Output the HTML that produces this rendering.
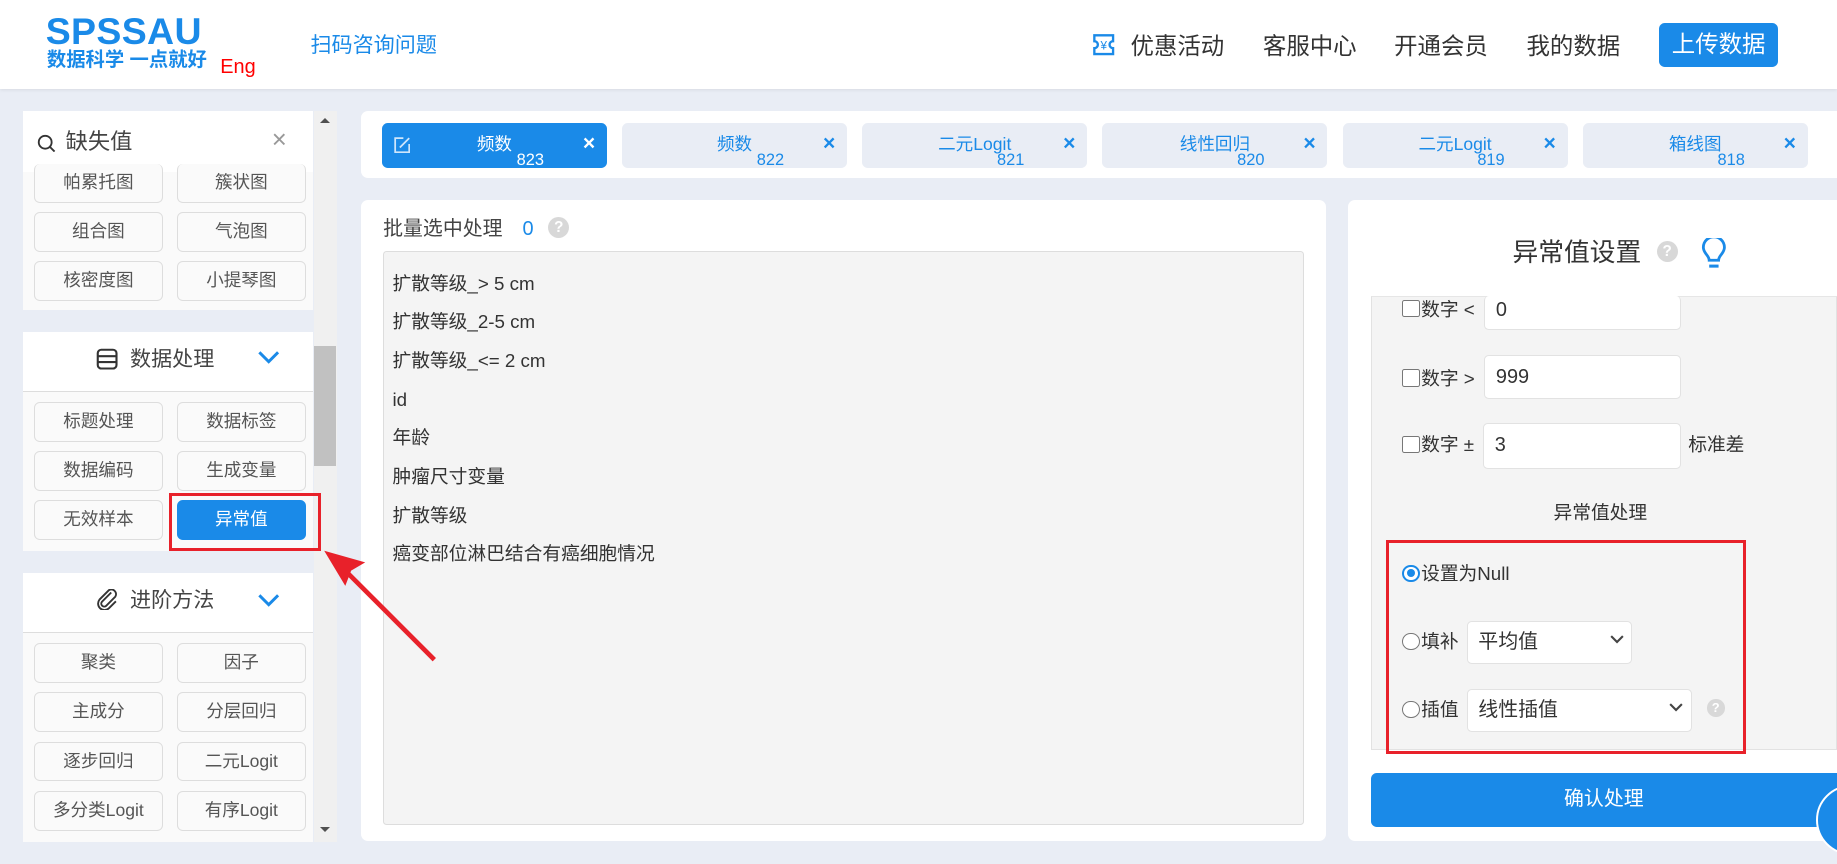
<!DOCTYPE html>
<html><head><meta charset="utf-8"><style>
*{box-sizing:border-box;margin:0;padding:0}
html,body{width:1837px;height:864px;overflow:hidden;background:#e9edf5}
#w{zoom:1.17155;width:1568px;height:737.5px;position:relative;font-family:"Liberation Sans","Noto Sans CJK SC",sans-serif;color:#333;line-height:1.2}
.a{position:absolute}
.hdr{left:0;top:0;width:1568px;height:76px;background:#fff;box-shadow:0 1px 3px rgba(0,0,0,.08)}
.nav{font-size:20px;color:#333;top:27px}
.btn{position:absolute;width:110px;height:34px;border:1px solid #ddd;border-radius:5px;background:#fafafa;font-size:15px;color:#555;text-align:center;line-height:32px}
.sel{background:#1a8ae8;color:#fff;border-color:#1a8ae8}
.panel{background:#fff}
.tab{position:absolute;top:105px;width:192px;height:38px;background:#e9edf5;border-radius:5px;color:#1a8ae8;font-size:15px}
.tab .t{position:absolute;left:0;width:100%;text-align:center;top:9px;line-height:18px}
.tab .n{position:absolute;left:115px;top:24px;font-size:14px;line-height:16px}
.tab .x{position:absolute;right:10px;top:8px;font-size:18px;font-weight:bold;line-height:21px}
.item{position:absolute;left:335px;font-size:16px;color:#333;line-height:20px}
.inp{position:absolute;background:#fff;border:1px solid #e2e2e2;border-radius:4px;font-size:17px;padding-left:9px;color:#333}
.cb{position:absolute;width:15px;height:15px;border:1px solid #777;border-radius:2px;background:#fff}
.lb{position:absolute;font-size:16px;color:#333;line-height:20px}
.rd{position:absolute;width:15px;height:15px;border:1px solid #777;border-radius:50%;background:#fff}
.q{position:absolute;width:18px;height:18px;border-radius:50%;background:#d8d8d8;color:#fff;font-size:13px;font-weight:bold;text-align:center;line-height:18px}
</style></head><body><div id="w">
<div class="a hdr"></div>
<div class="a" style="left:39px;top:10px;font-size:32px;font-weight:bold;color:#1a8ae8;letter-spacing:0.3px;line-height:34px">SPSSAU</div>
<div class="a" style="left:40px;top:43px;font-size:16.5px;font-weight:bold;color:#1a8ae8;line-height:19px">数据科学 一点就好</div>
<div class="a" style="left:188px;top:48px;font-size:17px;color:#f00;line-height:20px">Eng</div>
<div class="a" style="left:265px;top:28px;font-size:18px;color:#1a8ae8">扫码咨询问题</div>
<svg class="a" style="left:932px;top:28px" width="20" height="20" viewBox="0 0 20 20"><path d="M2 2h16v5a3 3 0 0 0 0 6v5H2v-5a3 3 0 0 0 0-6z" fill="none" stroke="#1a8ae8" stroke-width="2"/><text x="10" y="14" font-size="10" fill="#1a8ae8" text-anchor="middle" font-family="Liberation Sans">¥</text></svg>
<div class="a nav" style="left:965px">优惠活动</div>
<div class="a nav" style="left:1078px">客服中心</div>
<div class="a nav" style="left:1190px">开通会员</div>
<div class="a nav" style="left:1303px">我的数据</div>
<div class="a" style="left:1416px;top:20px;width:102px;height:37px;background:#1a8ae8;border-radius:5px;color:#fff;font-size:20px;text-align:center;line-height:37px">上传数据</div>

<!-- sidebar -->
<div class="a" style="left:268px;top:95px;width:20px;height:624px;background:#f0f0f0"></div>
<div class="a" style="left:268px;top:295px;width:19px;height:103px;background:#c1c1c1"></div>
<div class="a" style="left:273px;top:101px;width:0;height:0;border:5px solid transparent;border-bottom-color:#505050;border-top:0"></div>
<div class="a" style="left:273px;top:706px;width:0;height:0;border:5px solid transparent;border-top-color:#505050;border-bottom:0"></div>
<div class="a panel" style="left:20px;top:95px;width:247px;height:170px;background:#fafafa"></div>
<div class="a panel" style="left:20px;top:95px;width:247px;height:52px"></div>
<svg class="a" style="left:32px;top:114px" width="16" height="16" viewBox="0 0 16 16"><circle cx="7" cy="7" r="5.5" fill="none" stroke="#333" stroke-width="1.6"/><path d="M11 11l4 4" stroke="#333" stroke-width="1.6"/></svg>
<div class="a" style="left:56px;top:110px;font-size:19px;color:#444">缺失值</div>
<div class="a" style="left:232px;top:107px;font-size:22px;color:#999">×</div>
<div class="btn" style="left:29px;top:140px;height:33px;border-top:0">帕累托图</div>
<div class="btn" style="left:151px;top:140px;height:33px;border-top:0">簇状图</div>
<div class="btn" style="left:29px;top:181px">组合图</div>
<div class="btn" style="left:151px;top:181px">气泡图</div>
<div class="btn" style="left:29px;top:223px">核密度图</div>
<div class="btn" style="left:151px;top:223px">小提琴图</div>

<div class="a" style="left:20px;top:283px;width:247px;height:187px;background:#fafafa"></div>
<div class="a panel" style="left:20px;top:283px;width:247px;height:52px;border-bottom:1px solid #ddd"></div>
<svg class="a" style="left:82px;top:297px" width="19" height="19" viewBox="0 0 19 19"><rect x="1.5" y="1.5" width="16" height="16" rx="3" fill="none" stroke="#333" stroke-width="1.8"/><path d="M1.5 7h16M1.5 12h16" stroke="#333" stroke-width="1.8"/></svg>
<div class="a" style="left:111px;top:296px;font-size:18px;color:#444">数据处理</div>
<svg class="a" style="left:219px;top:299px" width="20" height="12" viewBox="0 0 20 12"><path d="M2 2l8 8 8-8" fill="none" stroke="#1a8ae8" stroke-width="2.5"/></svg>
<div class="btn" style="left:29px;top:343px">标题处理</div>
<div class="btn" style="left:151px;top:343px">数据标签</div>
<div class="btn" style="left:29px;top:385px">数据编码</div>
<div class="btn" style="left:151px;top:385px">生成变量</div>
<div class="btn" style="left:29px;top:427px">无效样本</div>
<div class="btn sel" style="left:151px;top:427px">异常值</div>
<div class="a" style="left:144px;top:421px;width:130px;height:49px;border:3px solid #e8212a"></div>

<div class="a" style="left:20px;top:489px;width:247px;height:230px;background:#fafafa"></div>
<div class="a panel" style="left:20px;top:489px;width:247px;height:51px;border-bottom:1px solid #ddd"></div>
<svg class="a" style="left:82px;top:503px" width="20" height="18" viewBox="0 0 20 18"><path d="M13 3L5 11a2.5 2.5 0 0 0 3.5 3.5l8-8a4 4 0 0 0-5.5-5.5L3 9a5.5 5.5 0 0 0 8 7.5l6-6" fill="none" stroke="#333" stroke-width="1.6"/></svg>
<div class="a" style="left:111px;top:502px;font-size:18px;color:#444">进阶方法</div>
<svg class="a" style="left:219px;top:506px" width="20" height="12" viewBox="0 0 20 12"><path d="M2 2l8 8 8-8" fill="none" stroke="#1a8ae8" stroke-width="2.5"/></svg>
<div class="btn" style="left:29px;top:549px">聚类</div>
<div class="btn" style="left:151px;top:549px">因子</div>
<div class="btn" style="left:29px;top:591px">主成分</div>
<div class="btn" style="left:151px;top:591px">分层回归</div>
<div class="btn" style="left:29px;top:633px">逐步回归</div>
<div class="btn" style="left:151px;top:633px">二元Logit</div>
<div class="btn" style="left:29px;top:675px">多分类Logit</div>
<div class="btn" style="left:151px;top:675px">有序Logit</div>

<!-- tabs -->
<div class="a panel" style="left:308px;top:95px;width:1260px;height:57px;border-radius:6px 0 0 6px"></div>
<div class="tab" style="left:326px;background:#1a8ae8;color:#fff"><svg class="a" style="left:10px;top:12px" width="14" height="14" viewBox="0 0 14 14"><path d="M8 1H1v12h12V6M5 9l8-8" fill="none" stroke="#cfe6fb" stroke-width="1.5"/></svg><div class="t">频数</div><div class="n">823</div><div class="x">×</div></div>
<div class="tab" style="left:531px"><div class="t">频数</div><div class="n">822</div><div class="x">×</div></div>
<div class="tab" style="left:736px"><div class="t">二元Logit</div><div class="n">821</div><div class="x">×</div></div>
<div class="tab" style="left:941px"><div class="t">线性回归</div><div class="n">820</div><div class="x">×</div></div>
<div class="tab" style="left:1146px"><div class="t">二元Logit</div><div class="n">819</div><div class="x">×</div></div>
<div class="tab" style="left:1351px"><div class="t">箱线图</div><div class="n">818</div><div class="x">×</div></div>

<!-- main left -->
<div class="a panel" style="left:308px;top:171px;width:824px;height:547px;border-radius:6px"></div>
<div class="a" style="left:327px;top:186px;font-size:17px;color:#444;line-height:20px">批量选中处理</div>
<div class="a" style="left:446px;top:186px;font-size:17px;color:#1a8ae8;line-height:20px">0</div>
<div class="q" style="left:468px;top:185px">?</div>
<div class="a" style="left:327px;top:214px;width:786px;height:490px;background:#f4f4f4;border:1px solid #ddd;border-radius:3px"></div>
<div class="item" style="top:232px">扩散等级_&gt; 5 cm</div>
<div class="item" style="top:265px">扩散等级_2-5 cm</div>
<div class="item" style="top:298px">扩散等级_&lt;= 2 cm</div>
<div class="item" style="top:331px">id</div>
<div class="item" style="top:364px">年龄</div>
<div class="item" style="top:397px">肿瘤尺寸变量</div>
<div class="item" style="top:430px">扩散等级</div>
<div class="item" style="top:463px">癌变部位淋巴结合有癌细胞情况</div>

<!-- right panel -->
<div class="a panel" style="left:1151px;top:171px;width:417px;height:547px;border-radius:6px 0 0 6px"></div>
<div class="a" style="left:1291px;top:203px;font-size:22px;color:#333;line-height:26px">异常值设置</div>
<div class="q" style="left:1414px;top:206px">?</div>
<svg class="a" style="left:1452px;top:203px" width="22" height="28" viewBox="0 0 22 28"><path d="M7 19c0-4-5-6-5-11a9 9 0 0 1 18 0c0 5-5 7-5 11z" fill="none" stroke="#1a8ae8" stroke-width="2.4"/><path d="M7 24h8" stroke="#1a8ae8" stroke-width="2.6"/></svg>
<div class="a" style="left:1170px;top:253px;width:398px;height:387px;background:#f4f4f4;border:1px solid #e2e2e2;border-top:1px solid #e6e6e6"></div>
<div class="cb" style="left:1197px;top:256px"></div><div class="lb" style="left:1213px;top:254px">数字 &lt;</div>
<div class="inp" style="left:1267px;top:253px;width:168px;height:29px;line-height:24px;border-top:0">0</div>
<div class="cb" style="left:1197px;top:315px"></div><div class="lb" style="left:1213px;top:313px">数字 &gt;</div>
<div class="inp" style="left:1267px;top:303px;width:168px;height:38px;line-height:36px">999</div>
<div class="cb" style="left:1197px;top:372px"></div><div class="lb" style="left:1213px;top:370px">数字 ±</div>
<div class="inp" style="left:1266px;top:361px;width:169px;height:39px;line-height:37px">3</div>
<div class="lb" style="left:1441px;top:370px">标准差</div>
<div class="lb" style="left:1326px;top:428px">异常值处理</div>
<div class="a" style="left:1183px;top:461px;width:307px;height:183px;border:3px solid #e8212a"></div>
<div class="rd" style="left:1197px;top:482px;border:2px solid #1a8ae8"><div style="position:absolute;left:2px;top:2px;width:7px;height:7px;border-radius:50%;background:#1a8ae8"></div></div>
<div class="lb" style="left:1213px;top:480px">设置为Null</div>
<div class="rd" style="left:1197px;top:540px"></div><div class="lb" style="left:1213px;top:538px">填补</div>
<div class="inp" style="left:1252px;top:530px;width:141px;height:37px;line-height:35px">平均值</div>
<svg class="a" style="left:1374px;top:542px" width="12" height="8" viewBox="0 0 12 8"><path d="M1 1l5 5 5-5" fill="none" stroke="#444" stroke-width="1.8"/></svg>
<div class="rd" style="left:1197px;top:598px"></div><div class="lb" style="left:1213px;top:596px">插值</div>
<div class="inp" style="left:1252px;top:588px;width:192px;height:37px;line-height:35px">线性插值</div>
<svg class="a" style="left:1425px;top:600px" width="12" height="8" viewBox="0 0 12 8"><path d="M1 1l5 5 5-5" fill="none" stroke="#444" stroke-width="1.8"/></svg>
<div class="q" style="left:1457px;top:597px;width:15px;height:15px;line-height:15px;font-size:11px">?</div>
<div class="a" style="left:1170px;top:660px;width:398px;height:46px;background:#1a8ae8;border-radius:5px 0 0 5px;color:#fff;font-size:17px;text-align:center;line-height:46px">确认处理</div>
<div class="a" style="left:1550px;top:670px;width:60px;height:60px;border-radius:50%;background:#1a8ae8;border:2px solid #fff"></div>

<!-- arrow (on top) -->
<svg class="a" style="left:270px;top:460px" width="110" height="110" viewBox="0 0 110 110"><path d="M101 103L22 24" stroke="#e8212a" stroke-width="4"/><path d="M7 10L42 20 30 27 25 40z" fill="#e8212a"/></svg>
</div></body></html>
